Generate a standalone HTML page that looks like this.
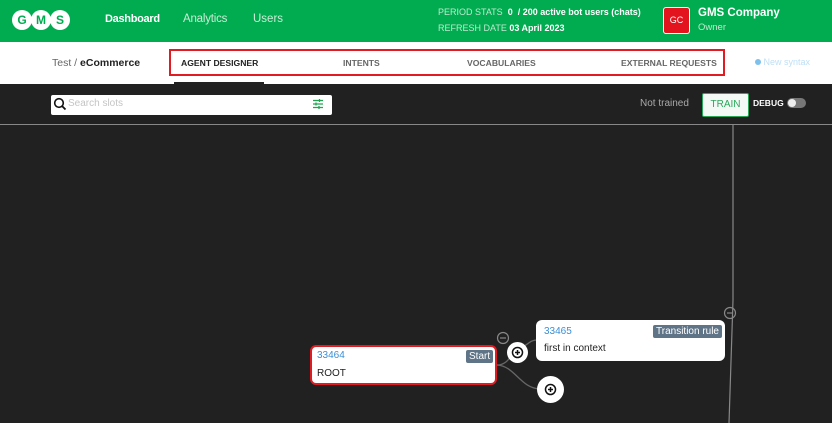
<!DOCTYPE html>
<html><head><style>
*{margin:0;padding:0;box-sizing:border-box}
body{width:832px;height:423px;overflow:hidden;font-family:"Liberation Sans",Arial,sans-serif;background:#212121;position:relative}
.hdr{position:absolute;left:0;top:0;width:832px;height:42px;background:#00ac4f}
.abs{position:absolute;white-space:nowrap}
.logo span{position:absolute;top:0;width:20px;height:20px;border-radius:50%;background:#fff;color:#00ac4f;font-weight:bold;font-size:12px;text-align:center;line-height:20px}
.bar{position:absolute;left:0;top:42px;width:832px;height:42px;background:#fff}
.tab{position:absolute;top:58px;font-size:8.6px;font-weight:bold;color:#666}
.card{position:absolute;background:#fff;border-radius:6px}
.id{position:absolute;color:#3a8fd8;font-size:10px}
.tag{position:absolute;background:#5f7486;color:#fff;font-size:10px;padding:0 3px;border-radius:2px;line-height:13px}
.plus{position:absolute;border-radius:50%;background:#fff}
</style></head><body>
<div class="hdr"></div>
<div class="abs logo" style="left:12px;top:10px"><span style="left:0">G</span><span style="left:19px">M</span><span style="left:38px">S</span></div>
<div class="abs" style="left:105px;top:13px;color:#fff;font-weight:bold;font-size:11px;letter-spacing:-0.3px">Dashboard</div>
<div class="abs" style="left:183px;top:13px;color:#c8ecd5;font-size:11.5px;letter-spacing:-0.2px">Analytics</div>
<div class="abs" style="left:253px;top:13px;color:#c8ecd5;font-size:11.5px">Users</div>
<div class="abs" style="left:438px;top:7px;font-size:9px;color:#bfe8cf">PERIOD STATS <b style="color:#fff">&nbsp;0 &nbsp;/ 200 active bot users (chats)</b></div>
<div class="abs" style="left:438px;top:23px;font-size:9px;color:#bfe8cf">REFRESH DATE <b style="color:#fff">03 April 2023</b></div>
<div class="abs" style="left:663px;top:7px;width:27px;height:27px;background:#e3141e;border:1px solid #fff;border-radius:3px;color:#fff;font-size:9px;text-align:center;line-height:25px">GC</div>
<div class="abs" style="left:698px;top:7px;color:#fff;font-weight:bold;font-size:11.5px">GMS Company</div>
<div class="abs" style="left:698px;top:22px;color:#bfe8cf;font-size:9.5px">Owner</div>
<div class="bar"></div>
<div class="abs" style="left:52px;top:57px;font-size:10.5px;color:#666">Test / <b style="color:#222">eCommerce</b></div>
<div class="abs" style="left:169px;top:49px;width:556px;height:27px;border:2px solid #e01b22"></div>
<div class="tab" style="left:181px;color:#222">AGENT DESIGNER</div>
<div class="tab" style="left:343px">INTENTS</div>
<div class="tab" style="left:467px">VOCABULARIES</div>
<div class="tab" style="left:621px">EXTERNAL REQUESTS</div>
<div class="abs" style="left:174px;top:82px;width:90px;height:3px;background:#222"></div>
<div class="abs" style="left:755px;top:57px;font-size:9px;color:#bfe0f5"><span style="display:inline-block;width:6px;height:6px;border-radius:50%;background:#7cc0ec"></span> New syntax</div>
<div class="abs" style="left:51px;top:95px;width:281px;height:20px;background:#fff;border-radius:2px"></div>
<svg class="abs" style="left:53px;top:97px" width="14" height="14" viewBox="0 0 14 14"><circle cx="6" cy="6" r="4.3" fill="none" stroke="#111" stroke-width="1.6"/><path d="M9 9l3.5 3.5" stroke="#111" stroke-width="1.8"/></svg>
<div class="abs" style="left:68px;top:98px;font-size:10px;color:#c4c4c4">Search slots</div>
<svg class="abs" style="left:312px;top:98px" width="12" height="12" viewBox="0 0 12 12" stroke="#1ea64e" stroke-width="1.3"><path d="M1 2.5h10M1 6h10M1 9.5h10"/><path d="M7.5 1v3M4 4.5v3M7 8v3"/></svg>
<div class="abs" style="left:640px;top:98px;font-size:10px;color:#aaa">Not trained</div>
<div class="abs" style="left:702px;top:93px;width:47px;height:24px;background:#f4f9f6;border:1px solid #2aa85a;border-radius:2px;color:#2aa85a;font-size:10px;text-align:center;line-height:22px">TRAIN</div>
<div class="abs" style="left:753px;top:98px;font-size:8.5px;color:#fff;font-weight:bold">DEBUG</div>
<div class="abs" style="left:787px;top:98px;width:19px;height:10px;border-radius:5px;background:#777"></div>
<div class="abs" style="left:788px;top:99px;width:8px;height:8px;border-radius:50%;background:#eee"></div>
<div class="abs" style="left:0;top:124px;width:832px;height:1px;background:#888"></div>
<svg class="abs" style="left:0;top:0" width="832" height="423">
<path d="M733 125 L733 300 L729 423" stroke="#888" stroke-width="1.2" fill="none"/>
<path d="M497 365 C510 365 512 350 520 348 C528 345 530 340 537 340" stroke="#666" fill="none" stroke-width="1.3"/>
<path d="M497 365 C515 366 520 388 540 389" stroke="#666" fill="none" stroke-width="1.3"/>
<circle cx="503" cy="338" r="5.5" fill="none" stroke="#888" stroke-width="1.2"/><path d="M500 338h6" stroke="#888" stroke-width="1.2"/>
<circle cx="730" cy="313" r="5.5" fill="none" stroke="#888" stroke-width="1.2"/><path d="M727 313h6" stroke="#888" stroke-width="1.2"/>
</svg>
<div class="card" style="left:310px;top:345px;width:187px;height:40px;border:2px solid #e01b22"></div>
<div class="id" style="left:317px;top:350px">33464</div>
<div class="tag" style="left:466px;top:350px">Start</div>
<div class="abs" style="left:317px;top:368px;font-size:10px;color:#222">ROOT</div>
<div class="card" style="left:536px;top:320px;width:189px;height:41px"></div>
<div class="id" style="left:544px;top:326px">33465</div>
<div class="tag" style="left:653px;top:325px">Transition rule</div>
<div class="abs" style="left:544px;top:343px;font-size:10px;color:#222">first in context</div>
<div class="plus" style="left:507px;top:342px;width:21px;height:21px"></div>
<svg class="abs" style="left:511px;top:346px" width="13" height="13" viewBox="0 0 13 13"><circle cx="6.5" cy="6.5" r="5" fill="none" stroke="#111" stroke-width="1.5"/><path d="M4 6.5h5M6.5 4v5" stroke="#111" stroke-width="1.5"/></svg>
<div class="plus" style="left:537px;top:376px;width:27px;height:27px"></div>
<svg class="abs" style="left:544px;top:383px" width="13" height="13" viewBox="0 0 13 13"><circle cx="6.5" cy="6.5" r="5" fill="none" stroke="#111" stroke-width="1.5"/><path d="M4 6.5h5M6.5 4v5" stroke="#111" stroke-width="1.5"/></svg>
</body></html>
